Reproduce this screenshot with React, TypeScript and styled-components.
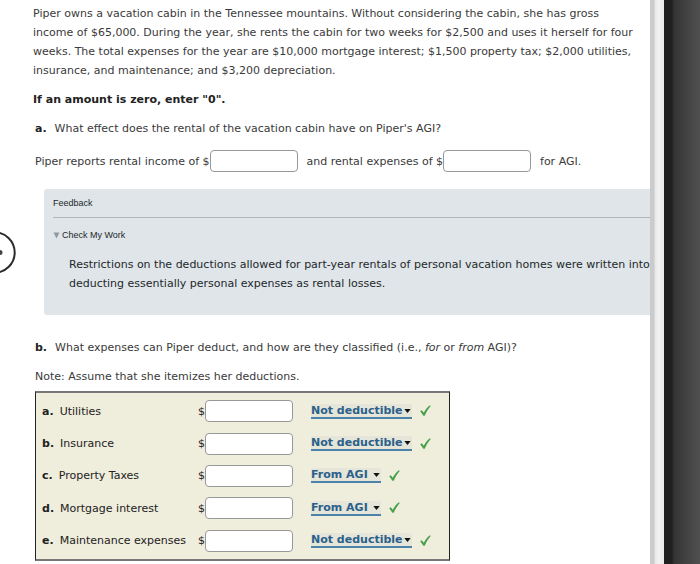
import React from "react";
import styled, { createGlobalStyle } from "styled-components";

const GlobalStyle = createGlobalStyle`
  *, *::before, *::after { box-sizing: border-box; }
  html, body, #root { height: 100%; }
  body {
    margin: 0;
    overflow: hidden;
    background: #fff;
    color: #3a3a3a;
    font: 11px/19px Verdana, "DejaVu Sans", sans-serif;
  }
`;

const Shell = styled.div`
  display: grid;
  grid-template-columns: minmax(0, 1fr) 14px 36px;
  min-height: 100vh;
  position: relative;
`;

const Content = styled.main`
  overflow: hidden;
  padding: 4px 0 0 33px;
`;

const ScrollTrack = styled.div`
  background: linear-gradient(to right, #cbcbcb 0 4px, #e6e6e6 5px, #f1f1f1 8px, #ebebeb 14px);
`;

const Backdrop = styled.div`
  background: linear-gradient(to right, #202020 0 8px, #333 10px, #3d3d3d 18px, #505050 36px);
`;

const Paragraph = styled.p`
  margin: 0 8px 10px 0;
`;

const Instruction = styled(Paragraph)`
  font-weight: bold;
  color: #222;
`;

const Note = styled.p`
  margin: 0 0 5px;
`;

const Question = styled.section`
  padding-left: 2px;
`;

const Marker = styled.b<{ $tight?: boolean }>`
  margin-right: ${(p) => (p.$tight ? 6 : 8)}px;
  color: #222;
`;

const AnswerLine = styled.div`
  display: flex;
  align-items: center;
  margin: 12px 0 17px;
  white-space: nowrap;
`;

const Field = styled.label`
  display: flex;
  align-items: center;
  margin-right: 9px;
`;

const AmountInput = styled.input`
  width: 88px;
  height: 22px;
  padding: 0 4px;
  border: 1px solid #989898;
  border-radius: 4px;
  background: #fff;
  font: inherit;
  outline: none;
`;

const FeedbackPanel = styled.aside`
  margin: 0 0 23px 9px;
  padding: 5px 0 22px 9px;
  border-radius: 3px 0 0 3px;
  background: #dfe5e8;
  color: #22282b;
`;

const FeedbackTitle = styled.h2`
  margin: 0;
  padding-bottom: 5px;
  border-bottom: 1px solid #afb7ba;
  font: 9px/18px "Liberation Sans", Arial, sans-serif;
`;

const Toggle = styled.button`
  display: flex;
  align-items: center;
  gap: 2px;
  margin-top: 8px;
  padding: 0;
  border: 0;
  background: none;
  color: inherit;
  font: 9px/18px "Liberation Sans", Arial, sans-serif;
`;

const Explanation = styled.p`
  margin: 11px 0 0 16px;
  white-space: nowrap;
`;

const AnswerTable = styled.table`
  width: 415px;
  height: 170px;
  padding: 2px 0;
  border: 1px solid #222;
  border-top: 2px solid #777;
  border-bottom: 2px solid #777;
  border-spacing: 0;
  background: #efeddc;
  color: #222;

  td, th {
    padding: 0;
    text-align: left;
    font-weight: normal;
    vertical-align: middle;
  }
  th { width: 162px; padding-left: 6px; }
  td:nth-child(2) { width: 113px; }
`;

const Choice = styled.div`
  display: flex;
  align-items: center;
  gap: 8px;
`;

const SelectBox = styled.span`
  position: relative;
  display: flex;
`;

const Select = styled.select<{ $wide: boolean }>`
  appearance: none;
  width: ${(p) => (p.$wide ? 101 : 70)}px;
  height: 15px;
  padding: 0;
  border: 0;
  border-bottom: 2px solid #4d83aa;
  border-radius: 2px 2px 0 0;
  background: #e5e5da;
  color: #2a6089;
  font: bold 11px/13px Verdana, "DejaVu Sans", sans-serif;
  outline: none;
`;

const Caret = styled.svg`
  position: absolute;
  right: 1px;
  top: 5px;
  pointer-events: none;
`;

const PageButton = styled.button`
  position: absolute;
  left: -27px;
  top: 231px;
  width: 43px;
  height: 43px;
  padding: 0;
  border: 0;
  background: none;
`;

const rows = [
  { id: "a", label: "Utilities", answer: "Not deductible" },
  { id: "b", label: "Insurance", answer: "Not deductible" },
  { id: "c", label: "Property Taxes", answer: "From AGI" },
  { id: "d", label: "Mortgage interest", answer: "From AGI" },
  { id: "e", label: "Maintenance expenses", answer: "Not deductible" },
];

const CheckMark = () => (
  <svg width="11" height="12" viewBox="0 0 11 12" role="img" aria-label="Correct">
    <path d="M0.2 6.2 L1.8 5.2 L3.8 7.8 C5.4 4.6 7.4 2 9.9 0.2 L10.7 0.9 C8.3 3.8 6.2 7 4.7 10.8 L3.4 10.8 Z" fill="#48a04b" />
  </svg>
);

export default function App() {
  return (
    <>
      <GlobalStyle />
      <Shell>
        <Content>
          <Paragraph>
            Piper owns a vacation cabin in the Tennessee mountains. Without considering the cabin, she has gross
            income of $65,000. During the year, she rents the cabin for two weeks for $2,500 and uses it herself for four
            weeks. The total expenses for the year are $10,000 mortgage interest; $1,500 property tax; $2,000 utilities,
            insurance, and maintenance; and $3,200 depreciation.
          </Paragraph>
          <Instruction>If an amount is zero, enter "0".</Instruction>
          <Question>
            <Paragraph>
              <Marker>a.</Marker>What effect does the rental of the vacation cabin have on Piper's AGI?
            </Paragraph>
            <AnswerLine>
              <Field>
                Piper reports rental income of $<AmountInput type="text" />
              </Field>
              <Field>
                and rental expenses of $<AmountInput type="text" />
              </Field>
              <span>for AGI.</span>
            </AnswerLine>
            <FeedbackPanel>
              <FeedbackTitle>Feedback</FeedbackTitle>
              <Toggle type="button" aria-expanded="true">
                <svg width="7" height="7" viewBox="0 0 7 7" aria-hidden="true">
                  <path d="M0.5 0.5 H6.5 L3.5 6.5 Z" fill="#92999c" />
                </svg>
                Check My Work
              </Toggle>
              <Explanation>
                Restrictions on the deductions allowed for part-year rentals of personal vacation homes were written into
                <br />
                deducting essentially personal expenses as rental losses.
              </Explanation>
            </FeedbackPanel>
          </Question>
          <Question>
            <Paragraph>
              <Marker>b.</Marker>What expenses can Piper deduct, and how are they classified (i.e., <i>for</i> or{" "}
              <i>from</i> AGI)?
            </Paragraph>
            <Note>Note: Assume that she itemizes her deductions.</Note>
            <AnswerTable>
              <tbody>
                {rows.map((row) => (
                  <tr key={row.id}>
                    <th scope="row">
                      <Marker $tight>{row.id}.</Marker>
                      {row.label}
                    </th>
                    <td>
                      <Field>
                        $<AmountInput type="text" aria-label={`${row.label} amount`} />
                      </Field>
                    </td>
                    <td>
                      <Choice>
                        <SelectBox>
                          <Select
                            $wide={row.answer === "Not deductible"}
                            defaultValue={row.answer}
                            aria-label={`${row.label} classification`}
                          >
                            <option>Not deductible</option>
                            <option>From AGI</option>
                          </Select>
                          <Caret width="7" height="4" viewBox="0 0 7 4" aria-hidden="true">
                            <path d="M0.3 0 H6.7 L3.5 4 Z" fill="#111" />
                          </Caret>
                        </SelectBox>
                        <CheckMark />
                      </Choice>
                    </td>
                  </tr>
                ))}
              </tbody>
            </AnswerTable>
          </Question>
        </Content>
        <ScrollTrack />
        <Backdrop />
        <PageButton type="button" aria-label="Previous page">
          <svg width="43" height="43" viewBox="0 0 43 43" aria-hidden="true">
            <circle cx="21.5" cy="21.5" r="20.2" fill="#fff" stroke="#2b2b2b" strokeWidth="2" />
            <circle cx="27" cy="21.5" r="2.5" fill="#444" />
          </svg>
        </PageButton>
      </Shell>
    </>
  );
}
